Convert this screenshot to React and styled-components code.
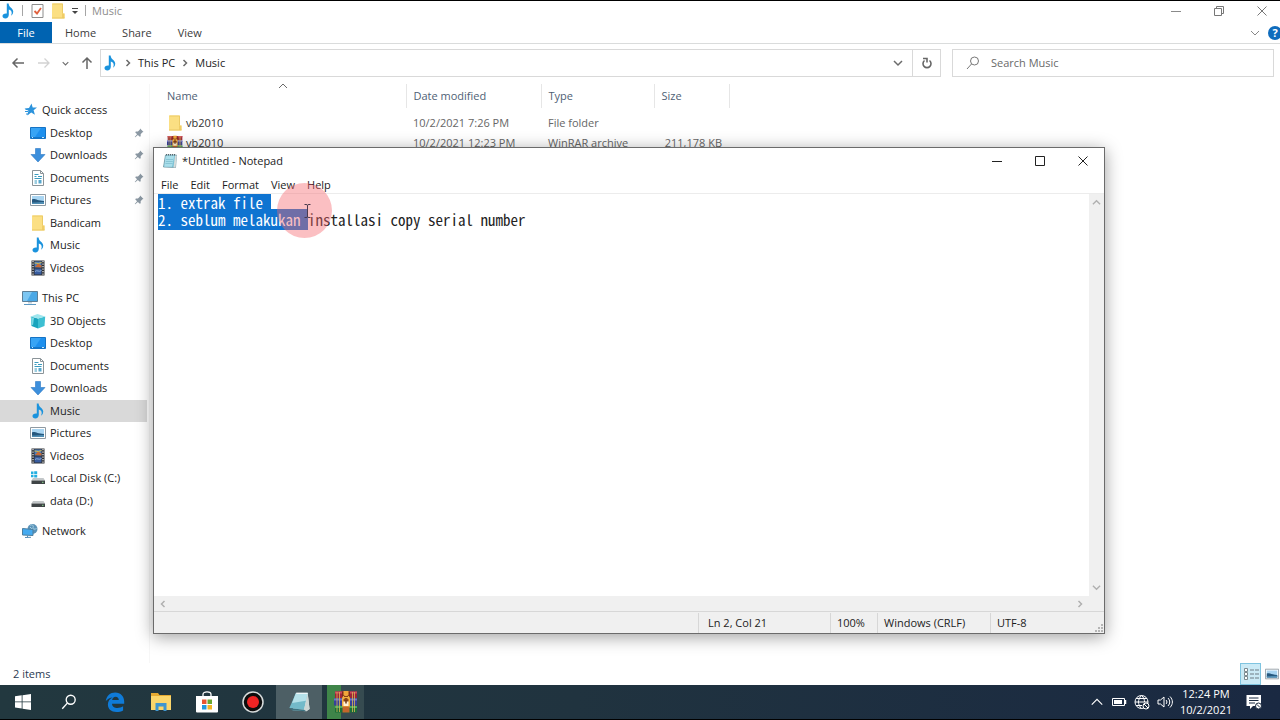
import React from "react"
import styled, { createGlobalStyle } from "styled-components"

const GlobalStyle = createGlobalStyle`
  * {
    box-sizing: border-box;
  }

  body {
    margin: 0;
    background: #000;
    color: #1c1c1c;
    font-family: "Open Sans", "Noto Sans", sans-serif;
    font-size: 11px;
    line-height: 16px;
  }

  button,
  input,
  textarea {
    margin: 0;
    padding: 0;
    border: 0;
    background: none;
    color: inherit;
    font: inherit;
    outline: none;
  }

  svg {
    display: block;
    flex: none;
  }
`

/* ---------- icons ---------- */

const Icon = ({ size = 16, box = 16, children, ...rest }) => (
  <svg width={size} height={size} viewBox={`0 0 ${box} ${box}`} fill="none" aria-hidden="true" {...rest}>
    {children}
  </svg>
)

const MusicIcon = (props) => (
  <Icon {...props}>
    <path
      d="M6.800.5h1.800c.2 2.300 1.300 3.200 3 4.700 2.200 2 2.200 4.800.2 7.100-.4.300-.8.100-.5-.4 1.100-2.700.1-4.700-2.500-5.400v5.300c0 2.200-1.600 3.700-3.500 3.700-1.700 0-2.800-1-2.800-2.400 0-1.700 1.700-2.800 4.300-2.500z"
      fill="#1b93dd"
    />
  </Icon>
)

const FolderIcon = (props) => (
  <Icon {...props}>
    <path d="M2 .5h11v10h1.500v5H2z" fill="#fbdf83" />
    <path d="M2.500 1h10v9.500" stroke="#eccb66" />
    <path d="M12 10.500h2.500v4.500H12z" fill="#f0cd66" />
    <path d="M2 15h12.500" stroke="#e9c763" />
  </Icon>
)

const StarIcon = (props) => (
  <Icon {...props}>
    <path d="M9.500 1.500l1.200 4 4.300.1-3.400 2.700 1.300 4.500-3.700-2.300-4 2.900 1.200-4.600L2.500 6.400l4.500-.3z" fill="#2c93dc" />
    <path d="M3 9.500h3M4 12h2.500M3.500 7.500h2" stroke="#2c93dc" />
  </Icon>
)

const DesktopIcon = (props) => (
  <Icon {...props}>
    <path d="M.5 2.500h15v11H.5z" fill="#1e90ee" stroke="#1673c4" />
    <path d="M1 12.500h14" stroke="#1476c8" />
    <path d="M1 3h10L5 12H1z" fill="#38a4f5" />
    <path d="M2 12.500h1M12 12.500h2" stroke="#cde8fb" />
  </Icon>
)

const DownloadIcon = (props) => (
  <Icon {...props}>
    <path d="M5.500 1.500h5v6h4.500L8 15 1 7.500h4.500z" fill="#3c8fdc" stroke="#2b78c5" strokeWidth=".6" />
  </Icon>
)

const DocumentIcon = (props) => (
  <Icon {...props}>
    <path d="M2.500.5h8l3 3v12h-11z" fill="#fff" stroke="#8b9499" />
    <path d="M10.500.5v3h3" stroke="#8b9499" />
    <path d="M4.500 4.500h4M4.500 6.500h2M8 6.500h4M4.500 8.500h7M4.500 11h2.500M4.500 13h2.500" stroke="#3b9bbf" />
    <path d="M8.500 10h3v3.500h-3z" fill="#57a7cd" />
  </Icon>
)

const PictureIcon = (props) => (
  <Icon {...props}>
    <path d="M.5 2.500h15v11H.5z" fill="#fff" stroke="#8f9aa2" />
    <path d="M2 4h12v8H2z" fill="#a9d5f2" />
    <path d="M2 7.500c3-1.500 5 1.500 12 1.500v3H2z" fill="#26587e" />
    <path d="M2 10.500c5 0 8-.5 12-.5v2H2z" fill="#4f8db3" />
  </Icon>
)

const VideoIcon = (props) => (
  <Icon {...props}>
    <path d="M1.500.5h13v15h-13z" fill="#2d2f33" />
    <path d="M4.500 1.500h7v6h-7z" fill="#4c7fc0" />
    <path d="M5 7l3-3.500 3.500 2V7.500z" fill="#c96a34" />
    <path d="M4.500 3l4 .5 3-1" stroke="#d9b846" />
    <path d="M4.500 8.500h7v6h-7z" fill="#395d9f" />
    <path d="M5 11.500c2-2 4 1 6.500-1" stroke="#8fb1da" />
    <path d="M3 1v14M13 1v14" stroke="#f1f1f1" strokeWidth="1.200" strokeDasharray="1.200 1.300" />
  </Icon>
)

const ComputerIcon = (props) => (
  <Icon {...props}>
    <path d="M.5 1.500h15v10H.5z" fill="#4aa8e6" stroke="#5d7f97" />
    <path d="M1 2h9l-5 9H1z" fill="#7cc6f2" />
    <path d="M6 12h4v1.500H6z" fill="#c3d2dc" />
    <path d="M2 14.500h12" stroke="#5c99c4" />
  </Icon>
)

const CubeIcon = (props) => (
  <Icon {...props}>
    <path d="M.8 3.500L8 5.500V15.500L1.500 13z" fill="#19a4bd" />
    <path d="M8 5.500l7.200-2L14.500 13 8 15.500z" fill="#3dbfd2" />
    <path d="M.8 3.500L7.500 1l7.700 2.500L8 5.500z" fill="#9fe6ee" />
    <path d="M1 4l3 1-1 7-1.500-.5z" fill="#7ad8e4" />
  </Icon>
)

const DriveIcon = ({ system, ...props }) => (
  <Icon {...props}>
    {system && <path d="M1 1.500h2.500V4H1zM4.200 1.200h3V4h-3zM1 4.700h2.500v2.500H1zM4.200 4.700h3v2.800h-3z" fill="#22aee0" />}
    <path d="M3 8h10.500l1.500 2.500H1.500z" fill="#c3c7c9" />
    <path d="M1.500 10.500H15V14H1.500z" fill="#3f4446" />
    <path d="M12 12.300h1.500" stroke="#8bd68d" />
  </Icon>
)

const NetworkIcon = (props) => (
  <Icon {...props}>
    <circle cx="10.500" cy="6" r="5" fill="#5b93b8" />
    <path d="M8 2.500c2-1.500 4 0 3 2s2 2 3.500 1M8 4l3 3" stroke="#a9d2e5" />
    <path d="M.5 5.500l10.500 1v6l-10.500-.5z" fill="#45aaf0" stroke="#4d7f9f" />
    <path d="M3 14.500l6-.2M5.500 12.500v2" stroke="#5a8fb6" />
  </Icon>
)

const PinIcon = (props) => (
  <Icon {...props}>
    <path d="M9.500 2l4.500 4.500-1.400.5-2.400 2.500.1 2.700-1.200.9-2.600-2.600L3 13.800l-.7-.5 3.100-3.700L2.900 7l1-1.100 2.700.2L9 3.600z" fill="#8b98a3" />
  </Icon>
)

const RarIcon = (props) => (
  <Icon box={24} {...props}>
    <path d="M1 1.500h22v6.500H1z" fill="#9c2438" />
    <path d="M1 1.500h22v2H1z" fill="#d0485c" />
    <path d="M0 8.500h23v7H0z" fill="#37409a" />
    <path d="M0 8.500h23v2H0z" fill="#6a70cc" />
    <path d="M1 16h22v6.500H1z" fill="#1b6f37" />
    <path d="M1 16h22v2H1z" fill="#49ae5e" />
    <path d="M3 2v20M5.500 2v20M18.500 2v20M20.500 2v20" stroke="#d9b655" strokeWidth=".8" />
    <path d="M8 1.500h8V8H8z" fill="#7d2c1b" />
    <path d="M8.500 16h7v6.500h-7z" fill="#c4662c" />
    <path d="M9.500 1h5v4h-5z" fill="#f0a63a" />
    <path d="M8 9c0-5.500 8-5.500 8 0v7.500H8z" fill="#f3b040" />
    <path d="M10 6.500h4M10 9.500c.5-1.500 3.500-1.500 4 0v2h-4z" fill="#8a4318" stroke="#8a4318" />
    <path d="M9.500 11.500h5v4.500h-5z" fill="#fff1d6" />
    <path d="M12 10v3.500" stroke="#6d3714" strokeWidth="1.500" />
  </Icon>
)

const NotepadIcon = (props) => (
  <Icon box={24} {...props}>
    <path d="M9 2.500L21.500 2.500l2 17-3.500 2.500-15-1z" fill="#e3ebe9" />
    <path d="M8.500 2.500h13L17.500 20.500 1.500 18.500z" fill="#73bac9" />
    <path d="M8.500 2.500h13l-2 8L4.500 13z" fill="#b5e1e9" />
    <path d="M21.500 2.500l2 17-3.500 2.500-2.500-1.500z" fill="#cdd6d4" />
    <path d="M1.500 18.500l16 2 2.500 1.500-15-.8z" fill="#3c7482" />
    <path d="M9 2.500h12.500" stroke="#eef7f8" strokeWidth="1.500" />
  </Icon>
)

const SmallNotepadIcon = (props) => (
  <Icon {...props}>
    <path d="M3.500 2h11l-1 12.500-12-.5z" fill="#7dc3d6" stroke="#5f8793" strokeWidth=".7" />
    <path d="M3.800 2.500h8.500L10 13.800H2.200z" fill="#a9deea" />
    <path d="M4 6.500h7M3.800 8.500h7M3.500 10.500h7" stroke="#73b4c6" strokeWidth=".6" />
    <path d="M13 2.500h1.800L13.500 14.500H11.500z" fill="#d8dcda" />
    <path d="M4 1.800h10" stroke="#57676e" strokeWidth="1.600" strokeDasharray="1 1" />
  </Icon>
)

const Chevron = ({ dir = "down", size = 10, weight = 1.5, color = "#6b6b6b" }) => {
  const paths = { down: "M1 3l4 4 4-4", up: "M1 7l4-4 4 4", right: "M3.500 2l3 3-3 3", left: "M6.500 2l-3 3 3 3" }
  return (
    <Icon size={size} box={10}>
      <path d={paths[dir]} stroke={color} strokeWidth={weight} />
    </Icon>
  )
}

const Magnifier = (props) => (
  <Icon stroke="#777" {...props}>
    <circle cx="9.500" cy="6" r="4" />
    <path d="M6.500 9L2 14" />
  </Icon>
)

const MinimizeIcon = (props) => (
  <Icon size={12} box={12} {...props}>
    <path d="M1 6.500h10" />
  </Icon>
)

const MaximizeIcon = (props) => (
  <Icon size={12} box={12} {...props}>
    <path d="M1.500 1.500h9v9h-9z" />
  </Icon>
)

const RestoreIcon = (props) => (
  <Icon size={12} box={12} {...props}>
    <path d="M1.500 3.500h7v7h-7zM3.500 3.500v-2h7v7h-2" />
  </Icon>
)

const CloseIcon = (props) => (
  <Icon size={12} box={12} {...props}>
    <path d="M1.500 1.500l9 9M10.500 1.500l-9 9" />
  </Icon>
)

/* ---------- explorer ---------- */

const Screen = styled.div`
  position: relative;
  display: flex;
  flex-direction: column;
  min-height: 100vh;
  border: solid #000;
  border-width: 1px 0;
`

const Explorer = styled.main`
  display: flex;
  flex: 1;
  flex-direction: column;
  background: #fff;
`

const TitleBar = styled.header`
  display: flex;
  align-items: center;
  height: 21px;
  padding-bottom: 2px;
  overflow: hidden;
  color: #8d8d8d;
`

const QuickTools = styled.div`
  display: flex;
  align-items: center;
  gap: 5px;
`

const ToolButton = styled.button`
  display: flex;
`

const Divider = styled.i`
  width: 1px;
  height: 11px;
  margin: 0 6px;
  background: #a5a5a5;
`

const WindowControls = styled.div`
  display: flex;
  margin-left: auto;
  margin-right: ${(props) => (props.$bleed ? "-3px" : "0")};
`

const ControlButton = styled.button`
  display: grid;
  place-items: center;
  width: 43px;
  height: 19px;
`

const Ribbon = styled.nav`
  display: flex;
  align-items: stretch;
  height: 22px;
  border-bottom: 1px solid #dadcdc;
`

const RibbonTab = styled.button`
  padding: 0 13px;
  color: #3c3c3c;
`

const FileTab = styled(RibbonTab)`
  width: 52px;
  background: #0063b1;
  color: #fff;
`

const RibbonEnd = styled.div`
  display: flex;
  align-items: center;
  gap: 8px;
  margin-left: auto;
  overflow: hidden;
`

const HelpButton = styled.button`
  width: 14px;
  height: 14px;
  margin-right: -2px;
  border-radius: 50%;
  background: #0f6cbd;
  color: #fff;
  font-weight: 700;
  line-height: 14px;
`

const AddressRow = styled.div`
  display: flex;
  align-items: stretch;
  height: 28px;
  margin: 5px 6px 0 0;
`

const History = styled.div`
  display: flex;
  align-items: center;
  justify-content: space-between;
  width: 100px;
  padding: 0 5px 0 10px;
`

const AddressBar = styled.div`
  display: flex;
  flex: 1;
  align-items: center;
  gap: 5px;
  padding-left: 1px;
  border: 1px solid #d9d9d9;
`

const Crumb = styled.a`
  color: #222;
  text-decoration: none;
`

const AddressEnd = styled.button`
  display: grid;
  place-items: center;
  align-self: stretch;
  width: 28px;
  border-left: ${(props) => (props.$line ? "1px solid #d9d9d9" : "0")};
`

const AddressEndGroup = styled.div`
  display: flex;
  align-self: stretch;
  margin-left: auto;
`

const SearchBox = styled.label`
  display: flex;
  align-items: center;
  gap: 10px;
  width: 322px;
  margin-left: 11px;
  padding-left: 12px;
  border: 1px solid #d9d9d9;

  input {
    flex: 1;
    min-width: 0;
  }

  input::placeholder {
    color: #6a6a6a;
    opacity: 1;
  }
`

const Body = styled.div`
  display: flex;
  flex: 1;
  padding-top: 7px;
`

const Sidebar = styled.nav`
  display: flex;
  flex-direction: column;
  gap: 8px;
  width: 150px;
  padding: 15px 2px 0 0;
  border-right: 1px solid #f7f7f7;
`

const Tree = styled.ul`
  display: grid;
  grid-auto-rows: 1fr;
  height: ${(props) => props.$height};
  margin: 0;
  padding: 0;
  list-style: none;
`

const TreeItem = styled.li`
  display: flex;
  padding-left: ${(props) => (props.$root ? "22px" : "30px")};
  background: ${(props) => (props.$active ? "#d9d9d9" : "none")};
`

const TreeLink = styled.a`
  display: flex;
  flex: 1;
  align-items: center;
  gap: 4px;
  color: #1c1c1c;
  text-decoration: none;

  svg:nth-of-type(2) {
    margin-left: auto;
    margin-right: 2px;
  }
`

const Files = styled.table`
  align-self: flex-start;
  width: 579px;
  table-layout: fixed;
  border-collapse: collapse;

  th {
    position: relative;
    height: 24px;
    padding: 0 7px;
    border-right: 1px solid #e6e6e6;
    color: #4f5f75;
    font-weight: 400;
    text-align: left;
  }

  tbody::before {
    content: "";
    display: block;
    height: 5px;
  }

  td {
    height: 20px;
    padding: 0 7px;
    color: #666;
    white-space: nowrap;
  }

  th:first-child,
  td:first-child {
    padding-left: 17px;
  }

  td:last-child {
    text-align: right;
  }
`

const FileName = styled.a`
  display: flex;
  align-items: center;
  gap: 3px;
  color: #333;
  text-decoration: none;
`

const SortMark = styled.span`
  position: absolute;
  top: -3px;
  left: 50%;
`

const StatusBar = styled.footer`
  display: flex;
  align-items: center;
  height: 22px;
  padding-left: 13px;
  color: #2b3a52;
`

const ViewButton = styled.button`
  display: grid;
  place-items: center;
  width: 21px;
  height: 22px;
  border: 1px solid ${(props) => (props.$active ? "#7fc4e0" : "transparent")};
  background: ${(props) => (props.$active ? "#cbeaf6" : "none")};
`

const ViewButtons = styled.div`
  display: flex;
  margin-left: auto;
  margin-right: -2px;
`

const quickAccess = [
  { label: "Quick access", icon: StarIcon, root: true },
  { label: "Desktop", icon: DesktopIcon, pinned: true },
  { label: "Downloads", icon: DownloadIcon, pinned: true },
  { label: "Documents", icon: DocumentIcon, pinned: true },
  { label: "Pictures", icon: PictureIcon, pinned: true },
  { label: "Bandicam", icon: FolderIcon },
  { label: "Music", icon: MusicIcon },
  { label: "Videos", icon: VideoIcon },
]

const SystemDriveIcon = () => <DriveIcon system />

const thisPc = [
  { label: "This PC", icon: ComputerIcon, root: true },
  { label: "3D Objects", icon: CubeIcon },
  { label: "Desktop", icon: DesktopIcon },
  { label: "Documents", icon: DocumentIcon },
  { label: "Downloads", icon: DownloadIcon },
  { label: "Music", icon: MusicIcon, active: true },
  { label: "Pictures", icon: PictureIcon },
  { label: "Videos", icon: VideoIcon },
  { label: "Local Disk (C:)", icon: SystemDriveIcon },
  { label: "data (D:)", icon: DriveIcon },
]

const network = [{ label: "Network", icon: NetworkIcon, root: true }]

const files = [
  { name: "vb2010", icon: FolderIcon, date: "10/2/2021 7:26 PM", type: "File folder", size: "" },
  { name: "vb2010", icon: RarIcon, date: "10/2/2021 12:23 PM", type: "WinRAR archive", size: "211,178 KB" },
]

const TreeGroup = ({ items, height }) => (
  <Tree $height={height}>
    {items.map(({ label, icon: ItemIcon, root, pinned, active }) => (
      <TreeItem key={label} $root={root} $active={active}>
        <TreeLink href="#">
          <ItemIcon />
          {label}
          {pinned && <PinIcon size={12} />}
        </TreeLink>
      </TreeItem>
    ))}
  </Tree>
)

const ExplorerWindow = () => (
  <Explorer>
    <TitleBar>
      <MusicIcon />
      <Divider />
      <QuickTools>
        <ToolButton aria-label="Properties">
          <Icon>
            <path d="M3 1.500h11v13h-11z" fill="#fff" stroke="#8d8d8d" />
            <path d="M5.500 8l2.500 2.500L12 5" stroke="#e0623f" strokeWidth="1.800" />
          </Icon>
        </ToolButton>
        <ToolButton aria-label="New folder">
          <FolderIcon />
        </ToolButton>
        <ToolButton aria-label="Customize toolbar">
          <Icon size={8} box={8}>
            <path d="M1 1.500h6" stroke="#444" />
            <path d="M1 4h6L4 7z" fill="#444" />
          </Icon>
        </ToolButton>
      </QuickTools>
      <Divider />
      Music
      <WindowControls $bleed>
        <ControlButton aria-label="Minimize">
          <MinimizeIcon stroke="#8a8a8a" />
        </ControlButton>
        <ControlButton aria-label="Restore">
          <RestoreIcon stroke="#777" />
        </ControlButton>
        <ControlButton aria-label="Close">
          <CloseIcon stroke="#777" />
        </ControlButton>
      </WindowControls>
    </TitleBar>
    <Ribbon>
      <FileTab>File</FileTab>
      <RibbonTab>Home</RibbonTab>
      <RibbonTab>Share</RibbonTab>
      <RibbonTab>View</RibbonTab>
      <RibbonEnd>
        <ToolButton aria-label="Expand ribbon">
          <Chevron weight={1} color="#888" />
        </ToolButton>
        <HelpButton>?</HelpButton>
      </RibbonEnd>
    </Ribbon>
    <AddressRow>
      <History>
        <ToolButton aria-label="Back">
          <Icon stroke="#666" strokeWidth="1.500">
            <path d="M14 8H3M7.500 3.500L3 8l4.500 4.500" />
          </Icon>
        </ToolButton>
        <ToolButton aria-label="Forward">
          <Icon stroke="#d2d2d2" strokeWidth="1.300">
            <path d="M2 8h11M8.500 3.500L13 8l-4.500 4.500" />
          </Icon>
        </ToolButton>
        <ToolButton aria-label="Recent locations">
          <Chevron size={7} />
        </ToolButton>
        <ToolButton aria-label="Up">
          <Icon stroke="#666" strokeWidth="1.500">
            <path d="M8 14V3M3.500 7.500L8 3l4.500 4.500" />
          </Icon>
        </ToolButton>
      </History>
      <AddressBar>
        <MusicIcon />
        <Chevron dir="right" />
        <Crumb href="#">This PC</Crumb>
        <Chevron dir="right" />
        <Crumb href="#">Music</Crumb>
        <AddressEndGroup>
          <AddressEnd aria-label="Previous locations">
            <Chevron />
          </AddressEnd>
          <AddressEnd $line aria-label="Refresh">
            <Icon size={14} box={14} stroke="#666" strokeWidth="1.600">
              <path d="M9.500 4.500a4 4 0 1 1-5 0M3 2.500h4V6.500" />
            </Icon>
          </AddressEnd>
        </AddressEndGroup>
      </AddressBar>
      <SearchBox>
        <Magnifier />
        <input type="search" placeholder="Search Music" aria-label="Search Music" />
      </SearchBox>
    </AddressRow>
    <Body>
      <Sidebar>
        <TreeGroup items={quickAccess} height="180px" />
        <TreeGroup items={thisPc} height="225px" />
        <TreeGroup items={network} height="22px" />
      </Sidebar>
      <Files>
        <colgroup>
          <col width="256" />
          <col width="135" />
          <col width="113" />
          <col width="75" />
        </colgroup>
        <thead>
          <tr>
            <th>
              Name
              <SortMark>
                <Chevron dir="up" weight={1} />
              </SortMark>
            </th>
            <th>Date modified</th>
            <th>Type</th>
            <th>Size</th>
          </tr>
        </thead>
        <tbody>
          {files.map(({ name, icon: FileIcon, date, type, size }) => (
            <tr key={type}>
              <td>
                <FileName href="#">
                  <FileIcon />
                  {name}
                </FileName>
              </td>
              <td>{date}</td>
              <td>{type}</td>
              <td>{size}</td>
            </tr>
          ))}
        </tbody>
      </Files>
    </Body>
    <StatusBar>
      2 items
      <ViewButtons>
        <ViewButton $active aria-label="Details view">
          <Icon>
            <path d="M1.500 2.500h3v3h-3zM1.500 6.500h3v3h-3zM1.500 10.500h3v3h-3z" stroke="#7d8a91" fill="#fff" />
            <path d="M7 4h4M12 4h4M7 8h4M12 8h4M7 12h4M12 12h4" stroke="#6f7d85" />
          </Icon>
        </ViewButton>
        <ViewButton aria-label="Large icons view">
          <PictureIcon size={14} />
        </ViewButton>
      </ViewButtons>
    </StatusBar>
  </Explorer>
)

/* ---------- notepad ---------- */

const NotepadFrame = styled.section`
  position: absolute;
  inset: 146px 175px 85px 153px;
  display: flex;
  flex-direction: column;
  border: 1px solid #6b6b6b;
  background: #fff;
  box-shadow: 0 3px 16px rgba(0, 0, 0, 0.38);
`

const NotepadTitle = styled.header`
  display: flex;
  align-items: center;
  gap: 4px;
  height: 27px;
  padding-bottom: 2px;
  padding-left: 8px;
`

const NotepadMenu = styled.nav`
  display: flex;
  gap: 12px;
  height: 19px;
  padding: 0 7px;
  border-bottom: 1px solid #ececec;
`

const MenuButton = styled.button`
  line-height: 20px;
`

const Editor = styled.div`
  display: grid;
  flex: 1;
  grid-template-rows: 1fr 15px;
  grid-template-columns: 1fr 15px;
  background: #f0f0f0;
`

const TextBox = styled.textarea`
  padding: 0 4px;
  background: #fff;
  color: #222;
  font-family: "Noto Sans Mono CJK JP", "Liberation Mono", monospace;
  font-size: 15px;
  line-height: 17px;
  resize: none;
  caret-color: transparent;

  &::selection {
    background: #0f74d1;
    color: #fff;
  }
`

const ScrollBar = styled.div`
  display: flex;
  flex-direction: ${(props) => (props.$vertical ? "column" : "row")};
  align-items: center;
  justify-content: space-between;
  padding: ${(props) => (props.$vertical ? "4px 0" : "0 4px")};
`

const NotepadStatus = styled.footer`
  display: flex;
  height: 22px;
  padding-top: 1px;
  border-top: 1px solid #d7d7d7;
  background: #f0f0f0;
`

const StatusCell = styled.span`
  width: ${(props) => props.$width};
  padding-left: ${(props) => props.$pad || "6px"};
  border-left: 1px solid #d7d7d7;
  line-height: 20px;

  &:first-child {
    margin-left: auto;
  }
`

const Grip = styled(Icon)`
  align-self: flex-end;
`

const note = "1. extrak file\n2. seblum melakukan installasi copy serial number"

const NotepadWindow = () => {
  const textRef = React.useRef(null)

  React.useEffect(() => {
    textRef.current.focus()
    textRef.current.setSelectionRange(0, note.indexOf("installasi"))
  }, [])

  return (
    <NotepadFrame>
      <NotepadTitle>
        <SmallNotepadIcon />
        *Untitled - Notepad
        <WindowControls>
          <ControlButton aria-label="Minimize">
            <MinimizeIcon stroke="#222" />
          </ControlButton>
          <ControlButton aria-label="Maximize">
            <MaximizeIcon stroke="#222" />
          </ControlButton>
          <ControlButton aria-label="Close">
            <CloseIcon stroke="#222" />
          </ControlButton>
        </WindowControls>
      </NotepadTitle>
      <NotepadMenu>
        {["File", "Edit", "Format", "View", "Help"].map((label) => (
          <MenuButton key={label}>{label}</MenuButton>
        ))}
      </NotepadMenu>
      <Editor>
        <TextBox ref={textRef} aria-label="Text editor" spellCheck={false} defaultValue={note} />
        <ScrollBar $vertical>
          <Chevron dir="up" size={9} color="#b0b0b0" />
          <Chevron size={9} color="#b0b0b0" />
        </ScrollBar>
        <ScrollBar>
          <Chevron dir="left" color="#b0b0b0" />
          <Chevron dir="right" color="#b0b0b0" />
        </ScrollBar>
      </Editor>
      <NotepadStatus>
        <StatusCell $width="132px" $pad="9px">Ln 2, Col 21</StatusCell>
        <StatusCell $width="47px">100%</StatusCell>
        <StatusCell $width="113px">Windows (CRLF)</StatusCell>
        <StatusCell $width="104px">UTF-8</StatusCell>
        <Grip size={10} box={10}>
          <path d="M8 1v2M8 4v2M8 7v2M5 4v2M5 7v2M2 7v2" stroke="#b5b5b5" strokeWidth="2" />
        </Grip>
      </NotepadStatus>
    </NotepadFrame>
  )
}

const Pointer = styled.div`
  position: absolute;
  top: 182px;
  left: 277px;
  display: grid;
  place-items: center;
  width: 55px;
  height: 55px;
  border-radius: 50%;
  background: rgba(246, 103, 110, 0.42);
  pointer-events: none;
`

/* ---------- taskbar ---------- */

const TaskbarFrame = styled.footer`
  display: flex;
  align-items: stretch;
  height: 34px;
  background: linear-gradient(90deg, #22383f, #20333f 45%, #1a2942);
  color: #fff;
`

const TaskButton = styled.button`
  display: grid;
  place-items: center;
  width: 46px;
  background: ${(props) => (props.$active ? "#4d5f65" : "none")};

  &:first-child {
    width: 45px;
    margin-right: 1px;
  }
`

const ProgressTask = styled(TaskButton)`
  width: 37px;
  margin-left: 5px;
  background: linear-gradient(90deg, #3f8549 14px, #364b50 14px);
`

const Tray = styled.div`
  display: flex;
  align-items: center;
  gap: 7px;
  margin-left: auto;
  padding-right: 17px;
`

const Clock = styled.time`
  margin-right: 6px;
  text-align: center;
`

const Taskbar = () => (
  <TaskbarFrame>
    <TaskButton aria-label="Start">
      <Icon>
        <path d="M0 2.300l6.700-1v6.200H0zM7.500 1.200L16 0v7.500H7.500zM0 8.300h6.700v6.200l-6.700-1zM7.500 8.300H16v7.600l-8.500-1.200z" fill="#fff" />
      </Icon>
    </TaskButton>
    <TaskButton aria-label="Search">
      <Magnifier size={18} stroke="#fff" strokeWidth="1.200" />
    </TaskButton>
    <TaskButton aria-label="Edge">
      <Icon size={20} box={20}>
        <path
          d="M.8 9C1.500 3.800 5.300.5 10.200.5c5.600 0 9 4 9 9v2.200H7c.2 3 2.700 4.200 5.400 4.200 2.200 0 4-.6 5.700-1.600v4.100c-1.900 1-4.100 1.500-6.600 1.500-5.200 0-8.600-2.900-8.600-7.500 0-3.300 1.700-5.700 4.700-7C5.100 5.600 2.500 6.800.8 9zm6.300-.9h6.700c0-2.100-1.200-3.400-3.200-3.400-1.900 0-3.200 1.300-3.500 3.400z"
          fill="#0f7bd8"
        />
      </Icon>
    </TaskButton>
    <TaskButton aria-label="File Explorer">
      <Icon size={22} box={22}>
        <path d="M1 2h7l1.500 2H21v15H1z" fill="#e5aa32" />
        <path d="M1 5h20v14H1z" fill="#fbd66b" />
        <path d="M5.500 12h11v8h-3v-4.500h-5V20h-3z" fill="#3f96cf" />
      </Icon>
    </TaskButton>
    <TaskButton aria-label="Microsoft Store">
      <Icon size={24} box={24}>
        <path d="M8 7V4.500C8 1 16 1 16 4.500V7" stroke="#fff" strokeWidth="1.300" />
        <path d="M1 6h22v15.500c0 .8-.5 1-1.500 1h-19c-1 0-1.500-.2-1.500-1z" fill="#fff" />
        <path d="M7 9.500h4.500V14H7z" fill="#e9542f" />
        <path d="M12.500 9.500H17V14h-4.500z" fill="#6aa82f" />
        <path d="M7 15h4.500v4.500H7z" fill="#2298dd" />
        <path d="M12.500 15H17v4.500h-4.500z" fill="#f2b524" />
      </Icon>
    </TaskButton>
    <TaskButton aria-label="Bandicam">
      <Icon size={22} box={22}>
        <circle cx="11" cy="11" r="10" fill="#0d0d0d" stroke="#d8dcdc" strokeWidth="1.500" />
        <circle cx="11" cy="11" r="6" fill="#ee2424" />
      </Icon>
    </TaskButton>
    <TaskButton $active aria-label="Notepad">
      <NotepadIcon size={22} />
    </TaskButton>
    <ProgressTask aria-label="WinRAR">
      <RarIcon size={24} />
    </ProgressTask>
    <Tray>
      <ToolButton aria-label="Show hidden icons">
        <Icon size={14} stroke="#fff" strokeWidth="1.300">
          <path d="M2 11l6-6 6 6" />
        </Icon>
      </ToolButton>
      <Icon>
        <path d="M1.500 4.500h12v7h-12z" stroke="#fff" />
        <path d="M3 6h8v4H3z" fill="#fff" />
        <path d="M14.500 6v4" stroke="#fff" strokeWidth="1.500" />
      </Icon>
      <Icon stroke="#fff">
        <circle cx="7.500" cy="8" r="6.500" />
        <path d="M1 8h13M2 4.500h11M2 11.500h6M7.500 1.500c-4 4-4 9 0 13M7.500 1.500c2.500 2 3 4.500 3 6.500" />
        <circle cx="12" cy="12" r="3" fill="#1b2b41" />
        <path d="M10 10l4 4" />
      </Icon>
      <Icon stroke="#fff">
        <path d="M1 6h2.500L7 3v10l-3.500-3H1zM9 6c1.200 1 1.200 3 0 4M11 4c2.300 2.500 2.300 5.500 0 8M13 2.500c3.200 3.500 3.200 7.500 0 11" />
      </Icon>
      <Clock>
        12:24 PM
        <br />
        10/2/2021
      </Clock>
      <ToolButton aria-label="Notifications">
        <Icon size={18} box={18}>
          <path d="M1.500 2h14.500v11H8l-3 3v-3H1.500z" fill="#fff" />
          <path d="M4 5h9.500M4 7.500h9.500M4 10h6" stroke="#1b2b41" />
          <circle cx="13.500" cy="13" r="3" fill="#fff" stroke="#1b2b41" />
          <path d="M12 11.500l3 3" stroke="#1b2b41" />
        </Icon>
      </ToolButton>
    </Tray>
  </TaskbarFrame>
)

export default function App() {
  return (
    <>
      <GlobalStyle />
      <Screen>
        <ExplorerWindow />
        <NotepadWindow />
        <Pointer>
          <Icon size={16}>
            <path d="M7.500 1.500h1.500q1.500 0 1.500 1v11q0 1-1.500 1H7.500M13.500 1.500H12q-1.500 0-1.500 1v11q0 1 1.500 1h1.500" stroke="#4b3a4c" />
          </Icon>
        </Pointer>
        <Taskbar />
      </Screen>
    </>
  )
}
